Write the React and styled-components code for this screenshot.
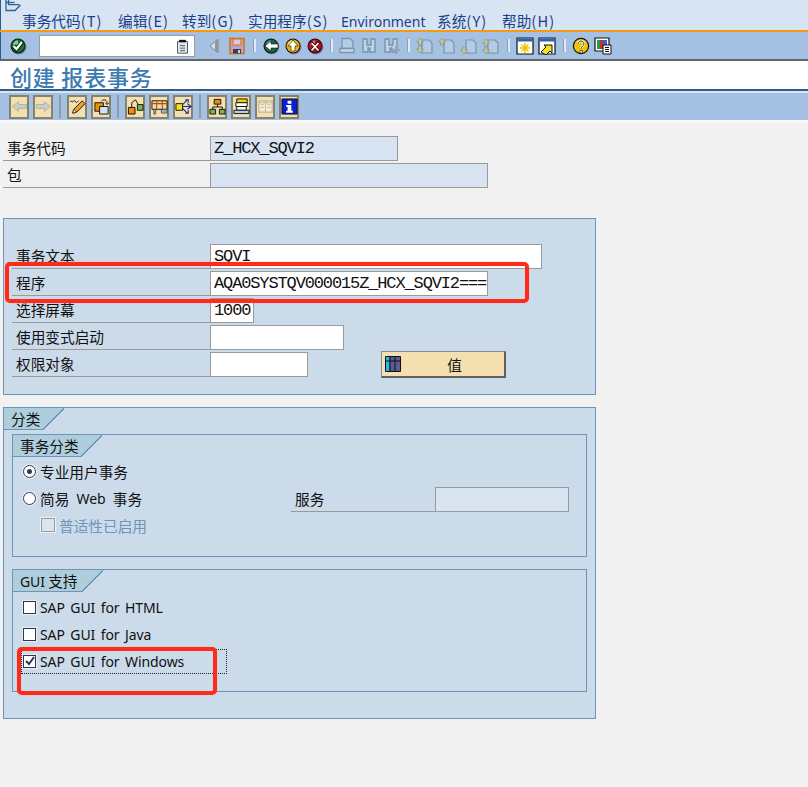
import React from 'react'
import styled, { createGlobalStyle } from 'styled-components'

const CJK = `"Noto Sans CJK SC", "Liberation Sans", sans-serif`
const LATIN = `"Noto Sans", "Noto Sans CJK SC", sans-serif`
const MONO = `"Liberation Mono", "Noto Sans CJK SC", monospace`

const Global = createGlobalStyle`
  html, body { margin: 0; padding: 0; background: #f1f1f1; }
  * { box-sizing: border-box; }
`

const Page = styled.div`
  position: relative;
  width: 808px;
  height: 787px;
  overflow: hidden;
  background: #f1f1f1;
  font-family: ${CJK};
  font-size: 14.67px;
  color: #111;
`

const MenuBar = styled.div`
  height: 30px;
  background: #d8e4f2;
  border-left: 1px solid #2b5b8e;
  position: relative;
`

const MenuList = styled.div`
  display: flex;
  padding: 12px 0 0 21px;
  height: 30px;
`

const MenuItem = styled.span`
  width: ${p => p.$w}px;
  flex: none;
  color: #1c3f8a;
  line-height: 17px;
  white-space: nowrap;
`

const Hotkey = styled.span`
  letter-spacing: 1.1px;
`

const MenuLatin = styled.span`
  font-family: ${LATIN};
  font-size: 14px;
`

const OrangeLine = styled.div`
  height: 2px;
  background: #f39c12;
`

const Toolbar = styled.div`
  display: flex;
  align-items: center;
  height: 27px;
  padding-left: 8px;
  background: #a4c1e3;
  border-left: 1px solid #2b5b8e;
`

const Slot = styled.span`
  flex: none;
  width: ${p => p.$w || 22}px;
  height: 20px;
  display: flex;
  align-items: center;
  justify-content: center;
`

const Sep = styled.span`
  flex: none;
  width: ${p => p.$w || 12}px;
  display: flex;
  justify-content: center;
  &::before {
    content: '';
    width: 2px;
    height: 13px;
    background: #dfe8f3;
    border-left: 1px solid #8e9fb4;
  }
`

const CmdBox = styled.div`
  position: relative;
  flex: none;
  width: 156px;
  height: 22px;
  margin: 0 9px 0 12px;
  background: #fff;
  border: 1px solid #9a9a9a;
`

const CmdIcon = styled.span`
  position: absolute;
  right: 4px;
  top: 3px;
  display: flex;
`

const GreyRule = styled.div`
  height: 2px;
  background: #666;
`

const TitleBar = styled.div`
  height: 30px;
  padding-left: 10px;
  background: #fff;
  border-bottom: 2px solid #2f5d8c;
  color: #3b7bb0;
  font-size: 22px;
  font-weight: 500;
  line-height: 30px;
  letter-spacing: 0.8px;
  white-space: pre;
`

const LightRule = styled.div`
  height: ${p => p.$h}px;
  background: ${p => p.$c};
`

const AppBar = styled.div`
  display: flex;
  align-items: center;
  height: 27px;
  padding-left: 9px;
  gap: 4px;
  background: #a4c1e3;
`

const AppButton = styled.span`
  flex: none;
  width: 20px;
  height: 24px;
  display: flex;
  align-items: center;
  justify-content: center;
  background: #f3dfb0;
  border: 2px solid #85826f;
  svg {
    flex: none;
    width: 17px;
    height: 17px;
  }
`

const AppSep = styled.span`
  flex: none;
  width: 2px;
  height: 23px;
  margin: 0 2px;
  background: #8f9aa6;
`

const Content = styled.div`
  padding: 13px 0 0 3px;
`

const Row = styled.div`
  display: flex;
  height: 25px;
  margin-bottom: 2px;
`

const Label = styled.div`
  flex: none;
  width: ${p => p.$w}px;
  height: 25px;
  padding-left: ${p => p.$pad}px;
  border-bottom: 1px solid #9a9a9a;
  line-height: 23px;
  white-space: nowrap;
`

const Field = styled.div`
  flex: none;
  width: ${p => p.$w}px;
  height: 25px;
  padding-left: 3px;
  background: ${p => (p.$ro ? '#d8e4f2' : '#fff')};
  border: 1px solid #9a9a9a;
  font-family: ${MONO};
  font-size: 17px;
  letter-spacing: -1.13px;
  line-height: 24px;
  white-space: pre;
`

const SpacerV = styled.div`
  height: ${p => p.$h}px;
`

const Panel = styled.div`
  width: 593px;
  border: 1px solid #6f94b9;
  background: #ccdbea;
`

const AttrPanel = styled(Panel)`
  height: 177px;
  padding: 25px 0 0 8px;
`

const AttrBody = styled.div`
  position: relative;
`

const ValueButton = styled.div`
  position: absolute;
  left: 369px;
  top: 107px;
  width: 125px;
  height: 27px;
  display: flex;
  align-items: center;
  padding-left: 3px;
  background: #f3dfb0;
  border: 1px solid #8c8c8c;
  border-right: 2px solid #5f5f5f;
  border-bottom: 2px solid #5f5f5f;
`

const ValueText = styled.span`
  flex: 1;
  text-align: center;
  padding-left: 4px;
`

const Tab = styled.div`
  position: relative;
  width: ${p => p.$w}px;
  height: 22px;
  padding-left: ${p => p.$pad}px;
  background: #afcedb;
  border-bottom: 1px solid #6f94b9;
  line-height: 22px;
  white-space: nowrap;
  &::after {
    content: '';
    position: absolute;
    left: 100%;
    top: 0;
    width: 21px;
    height: 22px;
    background: linear-gradient(
      to bottom right,
      #afcedb calc(50% - 0.7px),
      #6f94b9 calc(50% - 0.7px),
      #6f94b9 calc(50% + 0.7px),
      transparent calc(50% + 0.7px)
    );
  }
`

const ClassPanel = styled(Panel)`
  height: 312px;
`

const ClassBody = styled.div`
  padding: 4px 8px 0;
`

const SubPanel = styled.div`
  position: relative;
  width: 575px;
  height: 123px;
  margin-bottom: 12px;
  border: 1px solid #6f94b9;
`

const OptionList = styled.div`
  display: flex;
  flex-direction: column;
  gap: 7px;
  padding: ${p => p.$top}px 0 0 10px;
`

const Option = styled.div`
  display: flex;
  align-items: center;
  gap: 4px;
  height: 20px;
  padding-left: ${p => p.$indent || 0}px;
  color: ${p => (p.$off ? '#6f94b9' : '#111')};
  white-space: pre;
`

const Radio = styled.span`
  flex: none;
  width: 13px;
  height: 13px;
  display: flex;
  align-items: center;
  justify-content: center;
  border-radius: 50%;
  background: #fff;
  border: 1.5px solid #2f3550;
  box-shadow: 0 0 0 1px #e8eef5;
  &::after {
    content: '';
    width: 5px;
    height: 5px;
    border-radius: 50%;
    background: ${p => (p.$on ? '#33384f' : 'transparent')};
  }
`

const Check = styled.span`
  flex: none;
  width: ${p => p.$size || 13}px;
  height: ${p => p.$size || 13}px;
  display: flex;
  align-items: center;
  justify-content: center;
  background: ${p => (p.$off ? '#dbe5ef' : '#fff')};
  border: 1px solid ${p => (p.$off ? '#9a9a9a' : '#2f3550')};
  box-shadow: 0 0 0 1px ${p => (p.$off ? '#eef2f7' : '#e8eef5')};
`

const Mixed = styled.span`
  font-family: ${LATIN};
  font-size: 14px;
  word-spacing: 2px;
  letter-spacing: -0.1px;
`

const ServiceRow = styled.div`
  position: absolute;
  left: 278px;
  top: 52px;
  display: flex;
`

const Focus = styled.div`
  position: absolute;
  left: 8px;
  top: 79px;
  width: 206px;
  height: 25px;
  border: 1px dotted #222;
`

const Mark = styled.div`
  position: absolute;
  left: ${p => p.$x}px;
  top: ${p => p.$y}px;
  width: ${p => p.$w}px;
  height: ${p => p.$h}px;
  border: 4px solid #ff2a18;
  border-radius: 5px;
  box-shadow: 0 0 1px rgba(255, 42, 24, 0.6);
  pointer-events: none;
`

const Ic = ({ size = 18, box = 18, children }) => (
  <svg width={size} height={size} viewBox={`0 0 ${box} ${box}`}>
    {children}
  </svg>
)

const Ball = ({ fill, light, children }) => (
  <Ic>
    <circle cx="10" cy="10" r="7.5" fill="#8b80a8" />
    <circle cx="9" cy="9" r="7.5" fill="#111" />
    <circle cx="9" cy="9" r="6.5" fill={fill} />
    <path d="M4 8a5.5 5.5 0 0 1 5-4.8v4z" fill={light} />
    {children}
  </Ic>
)

const CheckIcon = () => (
  <Ball fill="#0d7a2c" light="#7fd08e">
    <path d="M4.5 9l3 3.5 6-7.5" fill="none" stroke="#111" strokeWidth="3.6" />
    <path d="M4.5 9l3 3 5.5-7" fill="none" stroke="#fff" strokeWidth="2.2" />
  </Ball>
)
const BackIcon = () => (
  <Ball fill="#0f6f3a" light="#3fa0d0">
    <path d="M3 9l6-5v3h7v4H9v3z" fill="#fff" stroke="#111" strokeWidth=".6" />
  </Ball>
)
const UpIcon = () => (
  <Ball fill="#f0b400" light="#fff08a">
    <path d="M9 3l5 6h-3v5H7V9H4z" fill="#fff" stroke="#111" strokeWidth=".6" />
  </Ball>
)
const CancelIcon = () => (
  <Ball fill="#d8001c" light="#ff6a6a">
    <path d="M5 5l8 9M13 5l-8 9" stroke="#111" strokeWidth="3.2" />
    <path d="M5.5 6l7 7.5M12.5 6l-7 7.5" stroke="#fff" strokeWidth="1.8" />
  </Ball>
)
const LeftTri = () => (
  <Ic>
    <path d="M12 2v14L4 9z" fill="#d9dee4" stroke="#7d8790" />
    <path d="M12 2v14l-3-3V5z" fill="#8d98a3" />
  </Ic>
)
const SaveIcon = () => (
  <Ic>
    <path d="M2 1.5h14v15H2z" fill="#b9a3cb" stroke="#d9740c" strokeWidth="1.6" />
    <path d="M5 2h8v6H5z" fill="#d9c9e2" stroke="#d9740c" />
    <path d="M5 12h8v4.5H5z" fill="#3b3b55" />
    <path d="M10 13h2v3h-2z" fill="#d9c9e2" />
  </Ic>
)
const PrintIcon = () => (
  <Ic>
    <path d="M4 1.5h8l3 3v7H4z" fill="#b4cbe6" stroke="#7b94a8" strokeWidth="1.3" />
    <path d="M2 11.5h14v4H2z" fill="#c7d6e8" stroke="#7b94a8" strokeWidth="1.3" />
  </Ic>
)
const FindIcon = ({ plus }) => (
  <Ic>
    <path d="M3 2h4v6h4V2h4v13h-5V11H8v4H3z" fill="#bfd3ea" stroke="#7b94a8" strokeWidth="1.4" />
    {plus && <path d="M13 9h2v3h3v2h-3v3h-2v-3h-3v-2h3z" fill="#8ea6bb" />}
  </Ic>
)
const PageIcon = ({ arrows }) => (
  <Ic>
    <path d="M6 3h7l3 3v10H6z" fill="#b4cbe6" stroke="#7b94a8" strokeWidth="1.2" />
    {arrows.map(([x, y, up], i) => (
      <path
        key={i}
        d={up ? `M${x} ${y}l3.5 4h-2v3h-3v-3h-2z` : `M${x} ${y}l3.5-4h-2v-3h-3v3h-2z`}
        fill="#c5c79a"
        stroke="#7d8a80"
        strokeWidth=".6"
      />
    ))}
  </Ic>
)
const WinIcon = ({ children }) => (
  <Ic>
    <path d="M1 1h16v16H1z" fill="#fff" stroke="#111" strokeWidth="1.2" />
    <path d="M1.5 1.5h15v3h-15z" fill="#2d62a8" />
    {children}
  </Ic>
)
const HelpIcon = () => (
  <Ic>
    <circle cx="9" cy="9" r="7.6" fill="#f5c400" stroke="#111" strokeWidth="1.2" />
    <path d="M6 7c0-4 6-4 6 0 0 2-3 2-3 5" fill="none" stroke="#fff" strokeWidth="2.2" />
    <path d="M6 7c0-4 6-4 6 0 0 2-3 2-3 5" fill="none" stroke="#111" strokeWidth=".8" />
    <path d="M8 13.5h2.4V16H8z" fill="#fff" stroke="#111" strokeWidth=".6" />
  </Ic>
)
const LayoutIcon = () => (
  <Ic>
    <path d="M1 1h14v13H1z" fill="#fff" stroke="#111" strokeWidth="1.2" />
    <path d="M3 3h3v9H3z" fill="#16a34a" />
    <path d="M6 3h3v9H6z" fill="#dc2626" />
    <path d="M9 3h4v9H9z" fill="#2563eb" />
    <path d="M9 8h8v9H9z" fill="#fff" stroke="#111" />
    <path d="M11 10.5h4M11 12.5h4M11 14.5h4" stroke="#111" />
  </Ic>
)
const F4Icon = () => (
  <Ic size={15}>
    <path d="M3 3h12v14H3z" fill="#dfe7ee" stroke="#55606a" strokeWidth="1.2" />
    <path d="M5 1h8v3H5z" fill="#111" />
    <path d="M6 8h6M6 11h6M6 14h6" stroke="#55606a" strokeWidth="1.2" />
  </Ic>
)
const ArrowL = () => (
  <Ic>
    <path d="M1.5 9l6.5-5v3h8.5v4H8v3z" fill="#c9ced0" stroke="#b5b09a" />
  </Ic>
)
const ArrowR = () => (
  <Ic>
    <path d="M16.5 9L10 4v3H1.5v4H10v3z" fill="#c9ced0" stroke="#b5b09a" />
  </Ic>
)
const PencilIcon = () => (
  <Ic>
    <path d="M1 4c1-2 2 1 3 0s2-2 3 0 2 0 3-1" fill="none" stroke="#111" strokeWidth="1" />
    <path d="M14 3l3 3-9 9-4 1 1-4z" fill="#f5a11c" stroke="#111" />
    <path d="M5 12l3 3-4 1z" fill="#fff" stroke="#111" strokeWidth=".7" />
  </Ic>
)
const CopyObjIcon = () => (
  <Ic>
    <path d="M2 5h9v9H2z" fill="#f08c00" stroke="#111" />
    <path d="M7 9h9v8H7z" fill="#cfe3f7" stroke="#111" />
    <path d="M9 3c3-2 6-1 6 3M13 5l2 2 2-2" fill="none" stroke="#111" />
  </Ic>
)
const RelIcon = () => (
  <Ic>
    <path d="M1.5 10h7v7h-7z" fill="#f08c00" stroke="#111" />
    <path d="M11 7h6v6h-6z" fill="#7fb24a" stroke="#111" />
    <path d="M5 10V5l4-3 3 5" fill="none" stroke="#111" />
  </Ic>
)
const TableIcon = () => (
  <Ic>
    <path d="M1 3h16v9H1z" fill="#f7d9a0" stroke="#111" />
    <path d="M1 6h16M6 3v9M12 3v9" stroke="#b34a1a" strokeWidth="1.2" />
    <path d="M3 12h2v5H3zM11 12h6v4h-6z" fill="#9bb0c8" stroke="#333" strokeWidth=".7" />
  </Ic>
)
const FlowIcon = () => (
  <Ic>
    <path d="M1 6h7v7H1z" fill="#f5e11c" stroke="#111" />
    <path d="M8 9h9M13 6l4 3-4 3M8 7l5-5M11 2h3v3M8 11l5 5M11 16h3v-3" fill="none" stroke="#1a2a9c" strokeWidth="1.2" />
  </Ic>
)
const TreeIcon = () => (
  <Ic>
    <path d="M5.5 1.5h7v5h-7z" fill="#f08c00" stroke="#111" />
    <path d="M9 6.5v3M4 12V9.5h10V12" fill="none" stroke="#111" />
    <path d="M1 12h6v5H1zM11 12h6v5h-6z" fill="#7fb24a" stroke="#111" />
  </Ic>
)
const StackIcon = () => (
  <Ic>
    <path d="M4 1h11v4H4z" fill="#f5d400" stroke="#111" />
    <path d="M3 5h12v4H3z" fill="#fff" stroke="#111" />
    <path d="M4 9h10v4H4z" fill="#fff" stroke="#111" />
    <path d="M1 13h16v3.5H1z" fill="#a9d4ee" stroke="#111" />
  </Ic>
)
const DocOffIcon = () => (
  <Ic>
    <path d="M2 3h14v12H2z" fill="#f7ecd0" stroke="#bfb69c" strokeWidth="1.2" />
    <path d="M9 3v12M4 7h3M4 10h3M11 7h3M11 10h3M2 5h14" stroke="#bfb69c" />
  </Ic>
)
const InfoIcon = () => (
  <Ic>
    <path d="M1 1h16v16H1z" fill="#0b1fd0" stroke="#111" />
    <path d="M7 3h4v3H7zM5.5 7.5H11v6h1.5v2h-7v-2H7v-4H5.5z" fill="#fff" />
  </Ic>
)
const ColumnsIcon = () => (
  <Ic size={16} box={16}>
    <path d="M.5.5h15v15H.5z" fill="#5b5b95" stroke="#111" />
    <path d="M1 1h3v14H1z" fill="#17c4e8" />
    <path d="M5 1v14M10 1v14M1 5h14" stroke="#111" />
  </Ic>
)
const DocCorner = () => (
  <svg width="16" height="12" viewBox="0 0 16 12">
    <path d="M1 0v10.5h9l5-5-2-.8H3.5V0" fill="none" stroke="#2d5f9a" strokeWidth="1.3" />
    <path d="M1 2.5h8.5" stroke="#2d5f9a" strokeWidth="1.3" />
  </svg>
)

const CornerWrap = styled.span`
  position: absolute;
  left: 4px;
  top: 0;
  display: flex;
`

const CheckMark = () => (
  <svg width="10" height="10" viewBox="0 0 10 10">
    <path d="M1 5l3 3 5-7" fill="none" stroke="#2f3550" strokeWidth="2" />
  </svg>
)

const menus = [
  ['事务代码', '(T)', 96],
  ['编辑', '(E)', 64],
  ['转到', '(G)', 66],
  ['实用程序', '(S)', 93],
  ['系统', '(Y)', 65],
  ['帮助', '(H)', 70]
]

const attrRows = [
  ['事务文本', 332, 'SQVI'],
  ['程序', 278, 'AQA0SYSTQV000015Z_HCX_SQVI2==='],
  ['选择屏幕', 44, '1000'],
  ['使用变式启动', 134, ''],
  ['权限对象', 98, '']
]

const MenuEntry = ({ entry }) => (
  <MenuItem $w={entry[2]}>{entry[0]}<Hotkey>{entry[1]}</Hotkey></MenuItem>
)

const App = () => (
  <Page>
    <Global />
    <MenuBar>
      <CornerWrap><DocCorner /></CornerWrap>
      <MenuList>
        {menus.slice(0, 4).map(m => <MenuEntry key={m[0]} entry={m} />)}
        <MenuItem $w={96}><MenuLatin>Environment</MenuLatin></MenuItem>
        {menus.slice(4).map(m => <MenuEntry key={m[0]} entry={m} />)}
      </MenuList>
    </MenuBar>
    <OrangeLine />
    <Toolbar>
      <Slot $w={18}><CheckIcon /></Slot>
      <CmdBox><CmdIcon><F4Icon /></CmdIcon></CmdBox>
      <Slot><LeftTri /></Slot>
      <Slot><SaveIcon /></Slot>
      <Sep />
      <Slot><BackIcon /></Slot>
      <Slot><UpIcon /></Slot>
      <Slot><CancelIcon /></Slot>
      <Sep $w={10} />
      <Slot><PrintIcon /></Slot>
      <Slot><FindIcon /></Slot>
      <Slot><FindIcon plus /></Slot>
      <Sep />
      <Slot><PageIcon arrows={[[4, 1, true], [4, 16, false]]} /></Slot>
      <Slot><PageIcon arrows={[[4, 1, true]]} /></Slot>
      <Slot><PageIcon arrows={[[4, 17, false]]} /></Slot>
      <Slot><PageIcon arrows={[[4, 2, true], [4, 17, false]]} /></Slot>
      <Sep />
      <Slot><WinIcon><path d="M9 6v10M4 11h10M5.5 7.5l7 7M12.5 7.5l-7 7" stroke="#f0c800" strokeWidth="1.6" /></WinIcon></Slot>
      <Slot><WinIcon><path d="M3 15l5-5-2-2h8v8l-2-2-4 4z" fill="#f5e11c" stroke="#111" /></WinIcon></Slot>
      <Sep />
      <Slot><HelpIcon /></Slot>
      <Slot><LayoutIcon /></Slot>
    </Toolbar>
    <GreyRule />
    <TitleBar>创建 报表事务</TitleBar>
    <LightRule $h={2} $c="#d8e4f2" />
    <AppBar>
      <AppButton><ArrowL /></AppButton>
      <AppButton><ArrowR /></AppButton>
      <AppSep />
      <AppButton><PencilIcon /></AppButton>
      <AppButton><CopyObjIcon /></AppButton>
      <AppSep />
      <AppButton><RelIcon /></AppButton>
      <AppButton><TableIcon /></AppButton>
      <AppButton><FlowIcon /></AppButton>
      <AppSep />
      <AppButton><TreeIcon /></AppButton>
      <AppButton><StackIcon /></AppButton>
      <AppButton><DocOffIcon /></AppButton>
      <AppButton><InfoIcon /></AppButton>
    </AppBar>
    <LightRule $h={3} $c="#f9f9f9" />
    <Content>
      <Row>
        <Label $w={207} $pad={4}>事务代码</Label>
        <Field $w={188} $ro>Z_HCX_SQVI2</Field>
      </Row>
      <Row>
        <Label $w={207} $pad={4}>包</Label>
        <Field $w={278} $ro />
      </Row>
      <SpacerV $h={28} />
      <AttrPanel>
        <AttrBody>
          {attrRows.map(([label, w, value]) => (
            <Row key={label}>
              <Label $w={198} $pad={4}>{label}</Label>
              <Field $w={w}>{value}</Field>
            </Row>
          ))}
          <ValueButton>
            <ColumnsIcon />
            <ValueText>值</ValueText>
          </ValueButton>
        </AttrBody>
      </AttrPanel>
      <SpacerV $h={12} />
      <ClassPanel>
        <Tab $w={39} $pad={7}>分类</Tab>
        <ClassBody>
          <SubPanel>
            <Tab $w={68} $pad={7}>事务分类</Tab>
            <OptionList $top={4}>
              <Option><Radio $on />专业用户事务</Option>
              <Option><Radio />简易 <Mixed>Web</Mixed> 事务</Option>
              <Option $off $indent={18}><Check $off $size={14} />普适性已启用</Option>
            </OptionList>
            <ServiceRow>
              <Label $w={144} $pad={4}>服务</Label>
              <Field $w={134} $ro />
            </ServiceRow>
          </SubPanel>
          <SubPanel>
            <Tab $w={69} $pad={7}><Mixed>GUI</Mixed> 支持</Tab>
            <OptionList $top={5}>
              <Option><Check /><Mixed>SAP GUI for HTML</Mixed></Option>
              <Option><Check /><Mixed>SAP GUI for Java</Mixed></Option>
              <Option><Check><CheckMark /></Check><Mixed>SAP GUI for Windows</Mixed></Option>
            </OptionList>
            <Focus />
          </SubPanel>
        </ClassBody>
      </ClassPanel>
    </Content>
    <Mark $x={5} $y={262} $w={524} $h={41} />
    <Mark $x={17} $y={647} $w={200} $h={48} />
  </Page>
)

export default App
